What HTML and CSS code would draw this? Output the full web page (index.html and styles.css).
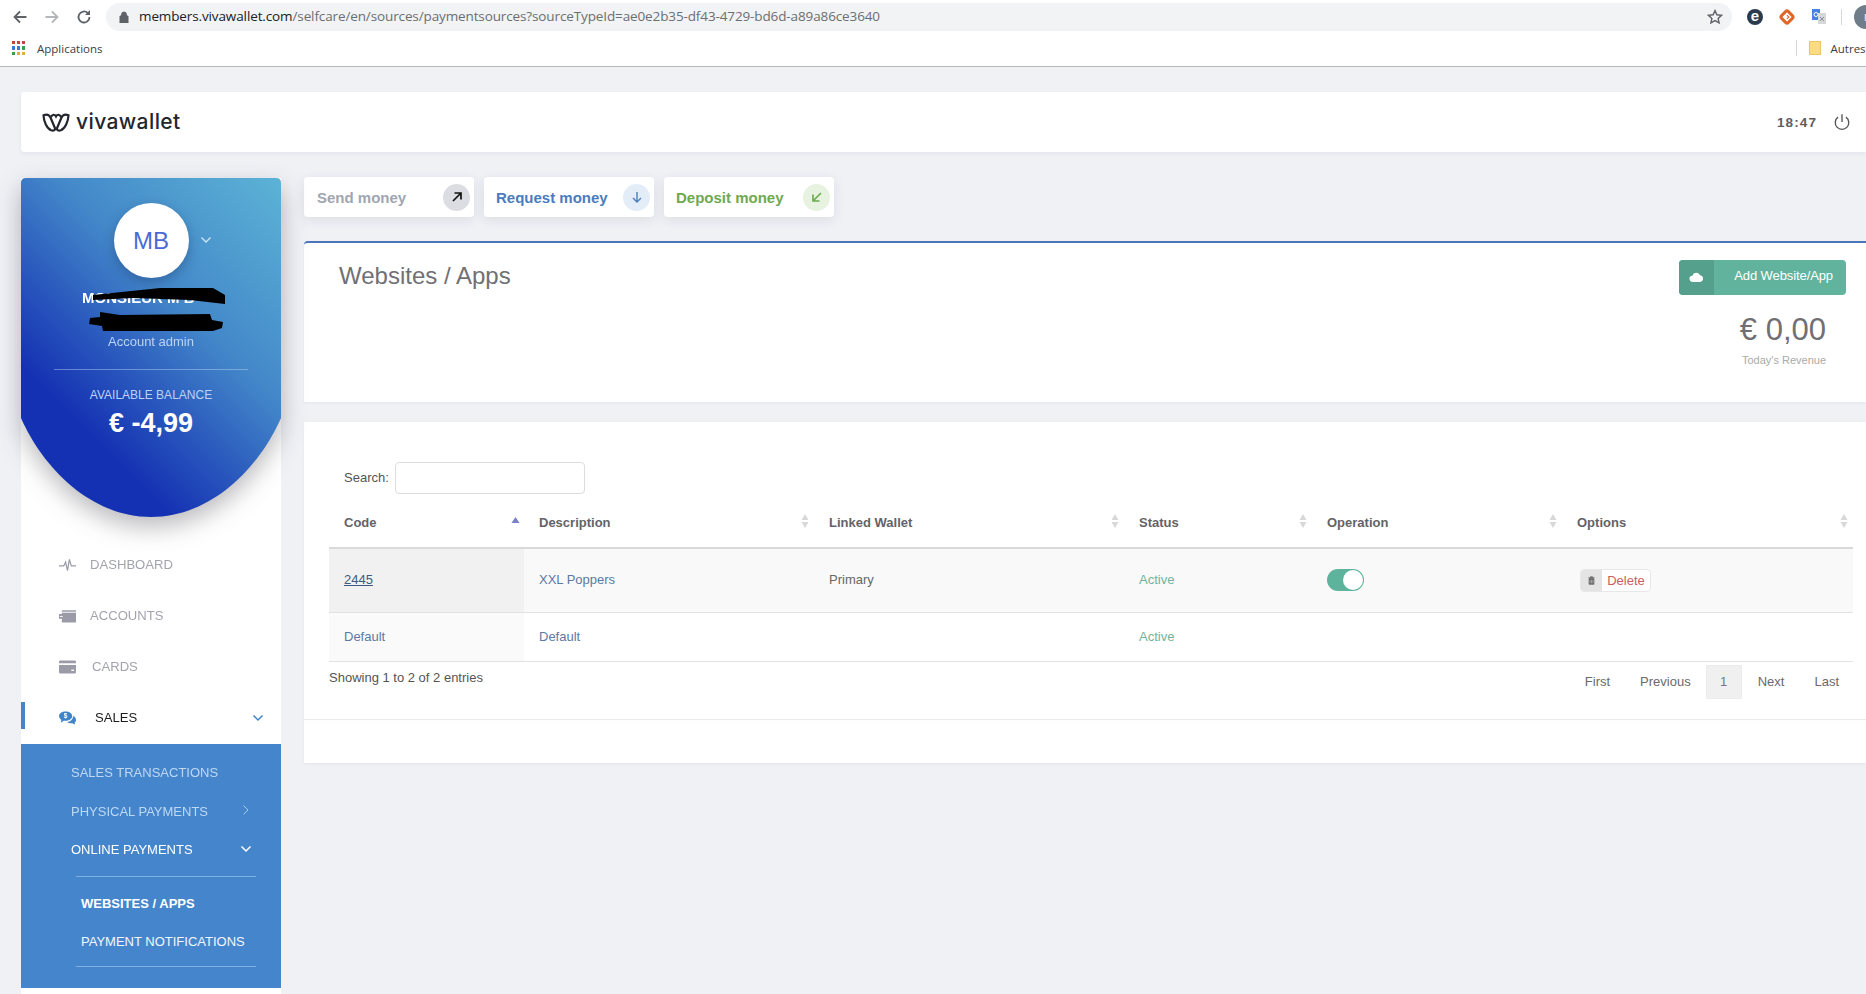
FILE: index.html
```html
<!DOCTYPE html>
<html lang="en">
<head>
<meta charset="utf-8">
<title>Websites / Apps</title>
<link rel="stylesheet" href="styles.css">
</head>
<body>
<div class="toolbar">
  <svg class="tb-icon" viewBox="0 0 16 16"><path d="M14.500 8H2.500M8 2.500L2.500 8 8 13.500" fill="none" stroke="#5f6368" stroke-width="1.800"/></svg>
  <svg class="tb-icon" viewBox="0 0 16 16"><path d="M1.500 8h12M8 2.500L13.500 8 8 13.500" fill="none" stroke="#b4b7ba" stroke-width="1.800"/></svg>
  <svg class="tb-icon" viewBox="0 0 16 16"><path d="M13.500 8a5.500 5.500 0 1 1-1.600-3.900" fill="none" stroke="#5f6368" stroke-width="1.800"/><path d="M14 1v5H9z" fill="#5f6368"/></svg>
  <div class="omnibox">
    <svg class="lock" viewBox="0 0 10 12"><path d="M1 5h8v7H1zM2.600 5V3.400a2.400 2.400 0 0 1 4.800 0V5" fill="#5f6368" stroke="#5f6368" stroke-width="1"/></svg>
    <span class="url"><b class="host">members.vivawallet.com</b>/selfcare/en/sources/paymentsources?sourceTypeId=ae0e2b35-df43-4729-bd6d-a89a86ce3640</span>
    <svg class="star" viewBox="0 0 16 16"><path d="M8 1.600l1.900 4.200 4.600.5-3.400 3.100 1 4.500L8 11.600l-4.100 2.300 1-4.500L1.500 6.300l4.600-.5z" fill="none" stroke="#5f6368" stroke-width="1.400"/></svg>
  </div>
  <div class="extensions">
    <span class="ext-e">e</span>
    <svg class="ext" viewBox="0 0 16 16"><rect x="3.200" y="3.200" width="9.600" height="9.600" rx="2" transform="rotate(45 8 8)" fill="none" stroke="#e0662a" stroke-width="3"/><path d="M8 6.200L9.800 8 8 9.800" fill="none" stroke="#e0662a" stroke-width="1.200"/></svg>
    <svg class="ext" viewBox="0 0 16 16"><path d="M1 0h8v11H1z" fill="#4a7fe0"/><path d="M7 4h8v11H7z" fill="#d5d7d8"/><path d="M9 8l4 4M13 8l-4 4" stroke="#8a8f94"/><circle cx="5" cy="5.500" r="2" fill="none" stroke="#fff"/></svg>
    <span class="ext-sep"></span>
    <span class="profile">r</span>
  </div>
</div>
<div class="bookmarks">
  <span class="apps"><i></i><i></i><i></i><i></i><i></i><i></i><i></i><i></i><i></i></span>
  <span class="bm-label">Applications</span>
  <span class="bm-sep"></span>
  <span class="folder"></span>
  <span class="bm-label">Autres</span>
</div>

<div class="page">
  <header class="topbar">
    <div class="brand">
      <svg class="brand-mark" viewBox="0 0 28 19"><path d="M1.500 2.200C4.500 1 7.200 1.600 8.500 4.500l4.300 10.200c1 2.600-1.500 3.400-3.600 2.600C4.800 15.500 1.800 8.500 1.500 2.200zM26.500 2.200C23.500 1 20.800 1.600 19.500 4.500l-4.300 10.200c-1 2.600 1.500 3.400 3.600 2.600 4.400-1.800 7.400-8.800 7.700-15.100zM8.500 4.500C10.500 1.200 12.500.9 14 3.500c1.500-2.600 3.500-2.300 5.500 1" fill="none" stroke="#23262f" stroke-width="2.200"/></svg>
      <span class="brand-name">vivawallet</span>
    </div>
    <div class="session">
      <span class="clock">18:47</span>
      <svg class="power" viewBox="0 0 16 16"><path d="M8 1v7M4.500 3.700a6 6 0 1 0 7 0" fill="none" stroke="#555" stroke-width="1.200"/></svg>
    </div>
  </header>

  <div class="layout">
    <aside class="sidebar">
      <div class="shield-wrap">
        <div class="shield">
          <div class="avatar-row">
            <span class="avatar">MB</span>
            <svg class="avatar-chevron" viewBox="0 0 12 8"><path d="M1.500 1.500L6 6l4.500-4.500" fill="none" stroke="#cfe6f5" stroke-width="1.300"/></svg>
          </div>
          <div class="identity">
            <div class="name">MONSIEUR M B</div>
            <svg class="scribble" viewBox="0 0 146 48"><path d="M13 11L80 4l53 0 12 7 0 9-35-4-57-2-40 2zM20 28l20 3 90-1 2 6 11 2-1 6-9 3-110 0-1-5-13-2 1-6 10-1z" fill="#000"/></svg>
            <div class="role">Account admin</div>
          </div>
          <div class="balance">
            <div class="balance-label">AVAILABLE BALANCE</div>
            <div class="balance-value">€ -4,99</div>
          </div>
        </div>
      </div>

      <nav class="nav">
        <a class="nav-item"><svg class="nav-icon" viewBox="0 0 18 14"><path d="M0 8h5l2-4 2 9 2-12 2 7h5" fill="none" stroke="#9b9ba8" stroke-width="1.300"/></svg><span>DASHBOARD</span></a>
        <a class="nav-item"><svg class="nav-icon" viewBox="0 0 18 14"><path d="M3 1h15v13H3V10H0V5h3z" fill="#9b9ba8"/><path d="M3 3h15M1 7.500h3" stroke="#fff"/></svg><span>ACCOUNTS</span></a>
        <a class="nav-item nav-cards"><svg class="nav-icon" viewBox="0 0 18 14"><path d="M0 1.500A1.500 1.500 0 0 1 1.500 0h15A1.500 1.500 0 0 1 18 1.500V3H0zM0 5h18v7.500a1.500 1.500 0 0 1-1.500 1.500h-15A1.500 1.500 0 0 1 0 12.500z" fill="#9b9ba8"/><path d="M13 10.500h3" stroke="#fff" stroke-width="1.500"/></svg><span>CARDS</span></a>
        <a class="nav-item nav-active"><svg class="nav-icon" viewBox="0 0 18 14"><path d="M7 0c4 0 7 2.200 7 5s-3 5-7 5H5l-3 2 .5-3C1 8 0 6.600 0 5c0-2.800 3-5 7-5z" fill="#3f83c9"/><path d="M15 5c2 1 3 2.500 3 4 0 1-.5 2-1.400 2.700L17 14l-3-1.500c-2 .4-4 0-5.500-1.200 3.500 0 6.500-2.800 6.500-6.300z" fill="#3f83c9"/><text x="7" y="7.500" class="dollar">$</text></svg><span>SALES</span><svg class="nav-chevron" viewBox="0 0 12 8"><path d="M1.500 1.500L6 6l4.500-4.500" fill="none" stroke="#3f83c9" stroke-width="1.500"/></svg></a>
      </nav>

      <div class="subnav">
        <a class="sub-item">SALES TRANSACTIONS</a>
        <a class="sub-item sub-arrow">PHYSICAL PAYMENTS<svg class="sub-icon" viewBox="0 0 8 12"><path d="M1.500 1.500L6 6l-4.500 4.500" fill="none" stroke="#a9c9ea" stroke-width="1"/></svg></a>
        <a class="sub-item sub-open">ONLINE PAYMENTS<svg class="sub-icon-down" viewBox="0 0 12 8"><path d="M1.500 1.500L6 6l4.500-4.500" fill="none" stroke="#fff" stroke-width="1.500"/></svg></a>
        <div class="sub-group">
          <a class="leaf leaf-current">WEBSITES / APPS</a>
          <a class="leaf">PAYMENT NOTIFICATIONS</a>
        </div>
      </div>
    </aside>

    <main class="content">
      <div class="actions">
        <a class="action action-send"><span>Send money</span><span class="action-badge"><svg viewBox="0 0 12 12"><path d="M2 10l8-8M3.500 2H10v6.500" fill="none" stroke="#111" stroke-width="1.700"/></svg></span></a>
        <a class="action action-request"><span>Request money</span><span class="action-badge"><svg viewBox="0 0 12 12"><path d="M6 1v10M2 7l4 4 4-4" fill="none" stroke="#4a7fbf" stroke-width="1.400"/></svg></span></a>
        <a class="action action-deposit"><span>Deposit money</span><span class="action-badge"><svg viewBox="0 0 12 12"><path d="M10 2l-8 8M2 3.500V10h6.500" fill="none" stroke="#6aab4f" stroke-width="1.600"/></svg></span></a>
      </div>

      <section class="panel panel-head">
        <h1 class="title">Websites / Apps</h1>
        <div class="head-side">
          <a class="add-btn">
            <span class="add-icon"><svg viewBox="0 0 16 11"><path d="M4 11a3.500 3.500 0 0 1-.5-7A4.500 4.500 0 0 1 12 3.500 3.800 3.800 0 0 1 12 11z" fill="#fff"/></svg></span>
            <span class="add-text">Add Website/App</span>
          </a>
          <div class="revenue">€ 0,00</div>
          <div class="revenue-label">Today's Revenue</div>
        </div>
      </section>

      <section class="panel panel-table">
        <label class="search"><span class="search-label">Search:</span><input class="search-input" type="text"></label>
        <table class="grid">
          <colgroup>
            <col class="c1"><col class="c2"><col class="c3"><col class="c4"><col class="c5"><col class="c6">
          </colgroup>
          <thead>
            <tr>
              <th class="sorted">Code<svg class="sort" viewBox="0 0 8 14"><path d="M4 1l4 6H0z" fill="#7a80c8"/></svg></th>
              <th>Description<svg class="sort" viewBox="0 0 8 14"><path d="M4 0l3.500 6H.5z" fill="#d8d8d8"/><path d="M4 14L.5 8h7z" fill="#d8d8d8"/></svg></th>
              <th>Linked Wallet<svg class="sort" viewBox="0 0 8 14"><path d="M4 0l3.500 6H.5z" fill="#d8d8d8"/><path d="M4 14L.5 8h7z" fill="#d8d8d8"/></svg></th>
              <th>Status<svg class="sort" viewBox="0 0 8 14"><path d="M4 0l3.500 6H.5z" fill="#d8d8d8"/><path d="M4 14L.5 8h7z" fill="#d8d8d8"/></svg></th>
              <th>Operation<svg class="sort" viewBox="0 0 8 14"><path d="M4 0l3.500 6H.5z" fill="#d8d8d8"/><path d="M4 14L.5 8h7z" fill="#d8d8d8"/></svg></th>
              <th>Options<svg class="sort" viewBox="0 0 8 14"><path d="M4 0l3.500 6H.5z" fill="#d8d8d8"/><path d="M4 14L.5 8h7z" fill="#d8d8d8"/></svg></th>
            </tr>
          </thead>
          <tbody>
            <tr class="row-odd">
              <td class="cell-key"><a class="code-link">2445</a></td>
              <td class="cell-link">XXL Poppers</td>
              <td>Primary</td>
              <td class="cell-active">Active</td>
              <td class="cell-control"><span class="toggle"><span class="knob"></span></span></td>
              <td class="cell-control">
                <a class="delete"><span class="delete-icon"><svg viewBox="0 0 10 12"><path d="M1.500 3h7v8.500h-7zM0.500 2h9M3.500 2V.7h3V2" fill="#666" stroke="#666"/><path d="M3 5v5M5 5v5M7 5v5" stroke="#ddd" stroke-width=".7"/></svg></span><span class="delete-text">Delete</span></a>
              </td>
            </tr>
            <tr class="row-even">
              <td class="cell-key cell-link">Default</td>
              <td class="cell-link">Default</td>
              <td></td>
              <td class="cell-active">Active</td>
              <td></td>
              <td></td>
            </tr>
          </tbody>
        </table>
        <div class="table-foot">
          <div class="info">Showing 1 to 2 of 2 entries</div>
          <div class="pager">
            <a class="page-link">First</a>
            <a class="page-link">Previous</a>
            <a class="page-link page-current">1</a>
            <a class="page-link">Next</a>
            <a class="page-link">Last</a>
          </div>
        </div>
        <div class="panel-rule"></div>
      </section>
    </main>
  </div>
</div>
</body>
</html>
```
FILE: styles.css
```css
* { box-sizing: border-box; }
html, body { margin: 0; height: 994px; overflow: hidden; }
body { font-family: "Liberation Sans", Arial, sans-serif; background: #eff1f5; color: #555; width: 1866px; }
a { text-decoration: none; }

/* browser chrome */
.toolbar { height: 33px; background: #fff; display: flex; align-items: center; padding-left: 12px; gap: 16px; overflow: hidden; }
.tb-icon { width: 16px; height: 16px; flex: none; }
.omnibox { width: 1626px; margin-left: -2px; height: 28px; background: #f1f3f4; border-radius: 14px; display: flex; align-items: center; padding-left: 13px; padding-right: 9px; flex: none; }
.lock { width: 10px; height: 12px; margin-right: 10px; flex: none; }
.url { font-family: "Open Sans", sans-serif; font-size: 13.500px; color: #6b6f73; white-space: nowrap; letter-spacing: -0.12px; flex: 1; margin-bottom: 2px; }
.host { font-weight: 400; color: #202124; }
.star { width: 16px; height: 16px; flex: none; }
.extensions { display: flex; align-items: center; gap: 16px; margin-left: -1px; flex: none; }
.ext-e { width: 16px; height: 16px; border-radius: 50%; background: #2b3b4d; color: #fff; font: bold 15px/14px "Liberation Sans", sans-serif; text-align: center; }
.ext { width: 16px; height: 16px; }
.ext-sep { width: 1px; height: 16px; background: #d5d7da; margin-left: -2px; }
.profile { width: 24px; height: 24px; border-radius: 50%; background: #6f7c8a; color: #e8eaed; font-size: 12px; line-height: 24px; text-align: center; margin-left: -4px; flex: none; }

.bookmarks { height: 34px; background: #fff; border-bottom: 1px solid #b5b7ba; display: flex; align-items: center; padding: 0 0 3px 12px; }
.apps { width: 14px; height: 14px; display: grid; grid-template-columns: repeat(3, 3px); gap: 2px; margin-right: 11px; }
.apps i { background: #c4463a; }
.apps i:nth-child(n+4) { background: #3f78d8; }
.apps i:nth-child(6) { background: #3f9a55; }
.apps i:nth-child(n+7) { background: #e0b030; }
.apps i:nth-child(7) { background: #3f9a55; }
.bm-label { font-family: "Open Sans", sans-serif; font-size: 11.500px; color: #3c4043; white-space: nowrap; }
.bm-sep { width: 1px; height: 16px; background: #d5d7da; margin-left: 1693px; margin-right: 12px; flex: none; }
.folder { width: 12px; height: 14px; background: #f9dc83; border: 1px solid #eac766; margin-right: 10px; flex: none; }

/* page */
.page { padding: 25px 0 0 21px; }
.topbar { height: 60px; background: #fff; border-radius: 4px 0 0 4px; box-shadow: 0 2px 4px rgba(40, 50, 80, .06); display: flex; justify-content: space-between; align-items: center; padding: 0 15px 0 21px; }
.brand { display: flex; align-items: center; gap: 6px; }
.brand-mark { width: 28px; height: 19px; }
.brand-name { font-family: Inter, sans-serif; font-size: 21px; font-weight: 500; color: #23262f; letter-spacing: .4px; margin-bottom: 2px; }
.session { display: flex; align-items: center; gap: 16px; }
.clock { font-size: 13.500px; font-weight: 700; letter-spacing: 1.100px; color: #5d5d62; }
.power { width: 18px; height: 18px; }

.layout { display: flex; gap: 23px; margin-top: 25px; align-items: flex-start; }

/* sidebar */
.sidebar { width: 260px; height: 816px; background: #fff; flex: none; margin-top: 1px; }
.shield-wrap { filter: drop-shadow(0 10px 12px rgba(40, 40, 50, .32)); }
.shield { height: 339px; padding-top: 25px; color: #fff; text-align: center; background: linear-gradient(45deg, #1430b3 0, #1430b3 25%, #4387c9 62%, #5cb3d6 100%); clip-path: path("M5 0H255Q260 0 260 5V240C238 290 190 339 130 339C70 339 22 290 0 240V5Q0 0 5 0Z"); position: relative; }
.avatar-row { height: 75px; display: flex; justify-content: center; position: relative; }
.avatar { width: 75px; height: 75px; border-radius: 50%; background: #fff; color: #4a6bd6; font-size: 24px; line-height: 75px; box-shadow: 0 4px 12px rgba(20, 40, 90, .35); }
.avatar-chevron { position: absolute; left: 179px; top: 33px; width: 12px; height: 8px; }
.identity { position: relative; padding-top: 11px; height: 92px; border-bottom: 1px solid rgba(190, 215, 245, .45); margin: 0 33px; }
.name { font-size: 15px; font-weight: 700; text-align: left; margin-left: 28px; line-height: 17px; white-space: nowrap; }
.scribble { position: absolute; left: 26px; top: 6px; width: 146px; height: 48px; }
.role { position: absolute; left: 0; right: 0; top: 56px; font-size: 13px; color: #bcd2f7; line-height: 16px; }
.balance { padding-top: 17px; }
.balance-label { font-size: 12px; line-height: 16px; color: #bcd2f7; }
.balance-value { font-size: 27px; font-weight: 700; line-height: 30px; margin-top: 5px; }

.nav { padding-top: 22px; height: 227px; }
.nav-item { height: 51px; display: flex; align-items: center; padding-left: 38px; color: #a3a3ae; font-size: 13.100px; position: relative; }
.nav-icon { width: 17px; height: 14px; margin-right: 14px; flex: none; }
.nav-cards .nav-icon { margin-right: 16px; }
.nav-active { color: #1c1c1c; }
.nav-active .nav-icon { margin-right: 19px; }
.nav-active::before { content: ""; position: absolute; left: 0; top: 10px; width: 4px; height: 27px; background: #4585cb; }
.dollar { font: bold 7px "Liberation Sans", sans-serif; fill: #fff; text-anchor: middle; }
.nav-chevron { width: 12px; height: 8px; position: absolute; right: 17px; top: 22px; }

.subnav { height: 244px; background: #4585cb; padding-top: 16px; }
.sub-item { display: block; height: 38.500px; line-height: 26px; padding-left: 50px; font-size: 13px; color: #bed8f4; white-space: nowrap; position: relative; }
.sub-open { color: #fff; height: 39px; }
.sub-icon { position: absolute; left: 221px; top: 5px; width: 8px; height: 12px; }
.sub-icon-down { position: absolute; left: 219px; top: 8px; width: 12px; height: 8px; }
.sub-group { margin: 0 25px 0 55px; border-top: 1px solid #7fb0e4; border-bottom: 1px solid #7fb0e4; height: 91px; padding-top: 14px; }
.leaf { display: block; margin-left: 5px; height: 38px; line-height: 26px; font-size: 13px; color: #f2f7fd; white-space: nowrap; }
.leaf-current { font-weight: 700; color: #fff; }

/* main */
.content { flex: 1; min-width: 0; }
.actions { display: flex; gap: 10px; height: 40px; }
.action { width: 170px; height: 40px; background: #fff; border-radius: 4px; box-shadow: 0 3px 12px rgba(40, 50, 80, .1); display: flex; justify-content: space-between; align-items: center; padding: 0 4px 0 13px; font-size: 15px; font-weight: 700; }
.action-send { color: #a0a6b0; }
.action-request { color: #4a7cbd; padding-left: 12px; }
.action-deposit { color: #6ea94f; padding-left: 12px; }
.action-badge { width: 27px; height: 27px; border-radius: 50%; display: flex; align-items: center; justify-content: center; }
.action-badge svg { width: 12px; height: 12px; }
.action-send .action-badge { background: #dcdde2; }
.action-request .action-badge { background: #e3edf8; }
.action-deposit .action-badge { background: #e7f2e1; }

.panel { background: #fff; box-shadow: 0 1px 3px rgba(40, 50, 80, .06); }
.panel-head { height: 161px; margin-top: 24px; border-top: 2px solid #4a75b8; border-radius: 4px 0 0 0; display: flex; justify-content: space-between; padding: 0 20px 0 35px; }
.title { margin: 17px 0 0; font-size: 24px; font-weight: 400; color: #707074; line-height: 32px; }
.head-side { display: flex; flex-direction: column; align-items: flex-end; padding-top: 17px; }
.add-btn { width: 167px; height: 35px; border-radius: 4px; background: #62b39d; display: flex; overflow: hidden; color: #fff; font-size: 13px; }
.add-icon { width: 35px; background: #55a08c; display: flex; align-items: center; justify-content: center; }
.add-icon svg { width: 15px; height: 10px; margin-bottom: 2px; }
.add-text { flex: 1; text-align: right; padding-right: 13px; line-height: 31px; letter-spacing: -.1px; white-space: nowrap; }
.revenue { margin: 17px 20px 0 0; font-size: 31px; line-height: 36px; color: #707074; }
.revenue-label { margin: 5px 20px 0 0; font-size: 11px; line-height: 14px; color: #aaa; }

.panel-table { height: 341px; margin-top: 20px; padding: 40px 14px 0 25px; }
.search { display: flex; align-items: center; padding-left: 15px; font-size: 13px; color: #555; height: 32px; gap: 6px; }
.search-label { margin-bottom: 2px; }
.search-input { width: 190px; height: 32px; border: 1px solid #ddd; border-radius: 4px; background: #fff; }
.grid { border-collapse: collapse; table-layout: fixed; width: 1524px; margin-top: 0; font-size: 13px; }
.c1 { width: 195px; } .c2 { width: 290px; } .c3 { width: 310px; } .c4 { width: 188px; } .c5 { width: 250px; } .c6 { width: 291px; }
th { height: 54px; padding: 3px 0 0 15px; text-align: left; font-weight: 700; color: #636368; border-bottom: 2px solid #d9d9d9; position: relative; }
.sort { position: absolute; right: 5px; top: 20px; width: 8px; height: 14px; }
.sorted .sort { right: 4px; top: 22px; width: 9px; }
td { padding: 0 0 0 15px; color: #666; border-bottom: 1px solid #e2e2e2; }
.row-odd td { height: 64px; padding-bottom: 2px; background: #f9f9f9; }
.row-odd .cell-control { padding-bottom: 0; }
.row-odd .cell-key { background: #f1f1f1; }
.row-even td { height: 49px; }
.row-even .cell-key { background: #fafafa; }
.code-link { color: #3e5a80; text-decoration: underline; }
.cell-link { color: #5b79a3; }
td.cell-active { color: #6cb69e; }
.toggle { display: block; width: 37px; height: 22px; border-radius: 11px; background: #5eb39c; position: relative; }
.knob { position: absolute; right: 1px; top: 1px; width: 20px; height: 20px; border-radius: 50%; background: #fff; }
.delete { display: inline-flex; width: 71px; height: 23px; margin-left: 3px; border: 1px solid #e8e8e8; border-radius: 4px; background: #fff; overflow: hidden; vertical-align: middle; }
.delete-icon { width: 21px; background: #e4e4e4; display: flex; align-items: center; justify-content: center; }
.delete-icon svg { width: 7px; height: 9px; }
.delete-text { flex: 1; text-align: center; color: #c9605a; font-size: 13px; line-height: 21px; }
.table-foot { display: flex; justify-content: space-between; width: 1525px; }
.info { font-size: 13px; line-height: 15px; margin-top: 8px; color: #555; }
.pager { display: flex; padding-top: 3px; }
.page-link { height: 34px; line-height: 34px; font-size: 13px; color: #6a6a6a; padding: 0 15px; }
.page-current { width: 36px; padding: 0; margin-right: 1px; text-align: center; background: #f0f0f0; border: 1px solid #ececec; color: #777; line-height: 32px; }
.panel-rule { height: 1px; margin: 20px -14px 0 -25px; background: #ececec; box-shadow: 0 2px 5px rgba(40, 50, 80, .05); }
```
